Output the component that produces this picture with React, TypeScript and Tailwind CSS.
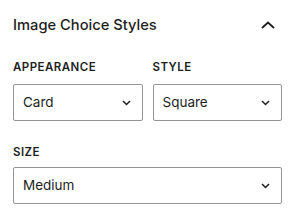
function FakeSelect({ value, className = "" }: { value: string; className?: string }) {
    return (
        <div
            className={`flex h-[37px] items-center justify-between rounded-[2px] border border-[#949494] bg-white pl-[9px] pr-[11px] ${className}`}
        >
            <span className="text-[13.5px] text-[#1e1e1e]">{value}</span>
            <svg width="9" height="6" viewBox="0 0 9 6" fill="none">
                <path d="M1 1l3.5 3.5L8 1" stroke="#1e1e1e" strokeWidth="1.5" />
            </svg>
        </div>
    );
}

function Label({ children }: { children: string }) {
    return (
        <div className="h-4 text-[11.5px] leading-4 font-semibold uppercase tracking-[0.45px] text-[#1e1e1e]">
            {children}
        </div>
    );
}

export default function App() {
    return (
        <div
            className="h-[220px] w-[300px] bg-white pl-[13px] pr-[18px] text-[#1e1e1e]"
            style={{ fontFamily: "Inter, 'Liberation Sans', sans-serif" }}
        >
            <div className="flex h-[40px] items-end justify-between pb-[5px]">
                <span className="text-[14.7px] leading-5 font-medium">Image Choice Styles</span>
                <svg width="14" height="8" viewBox="0 0 14 8" fill="none" className="mb-[6px] mr-[7px]">
                    <path d="M1 7l6-5.5L13 7" stroke="#1e1e1e" strokeWidth="1.8" />
                </svg>
            </div>

            <div className="mt-[19px] grid grid-cols-2 gap-x-[10px]">
                <div>
                    <Label>Appearance</Label>
                    <FakeSelect value="Card" className="mt-[9px]" />
                </div>
                <div>
                    <Label>Style</Label>
                    <FakeSelect value="Square" className="mt-[9px]" />
                </div>
            </div>

            <div className="mt-[23px]">
                <Label>Size</Label>
                <FakeSelect value="Medium" className="mt-[7px]" />
            </div>
        </div>
    );
}
